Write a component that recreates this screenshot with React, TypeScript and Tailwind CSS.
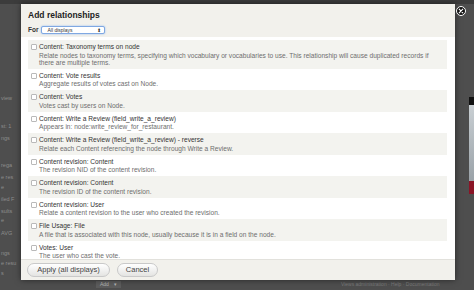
const rows = [
  {
    title: 'Content: Taxonomy terms on node',
    desc: 'Relate nodes to taxonomy terms, specifying which vocabulary or vocabularies to use. This relationship will cause duplicated records if there are multiple terms.',
  },
  { title: 'Content: Vote results', desc: 'Aggregate results of votes cast on Node.' },
  { title: 'Content: Votes', desc: 'Votes cast by users on Node.' },
  { title: 'Content: Write a Review (field_write_a_review)', desc: 'Appears in: node:write_review_for_restaurant.' },
  {
    title: 'Content: Write a Review (field_write_a_review) - reverse',
    desc: 'Relate each Content referencing the node through Write a Review.',
  },
  { title: 'Content revision: Content', desc: 'The revision NID of the content revision.' },
  { title: 'Content revision: Content', desc: 'The revision ID of the content revision.' },
  { title: 'Content revision: User', desc: 'Relate a content revision to the user who created the revision.' },
  {
    title: 'File Usage: File',
    desc: 'A file that is associated with this node, usually because it is in a field on the node.',
  },
  { title: 'Votes: User', desc: 'The user who cast the vote.' },
]

// fragments of the page that shows at the left edge of the overlay
const behind = [
  { top: 'mt-[90px]', text: 'view' },
  { top: 'mt-[20px]', text: 'st: 1' },
  { top: 'mt-[4px]', text: 'ngs' },
  { top: 'mt-[19px]', text: 'rega' },
  { top: 'mt-[4px]', text: 'e res' },
  { top: 'mt-[2px]', text: 'e' },
  { top: 'mt-[4px]', text: 'iled F' },
  { top: 'mt-[4px]', text: 'sults' },
  { top: 'mt-[1px]', text: 'e' },
  { top: 'mt-[5px]', text: 'AVG' },
  { top: 'mt-[12px]', text: 'ngs' },
  { top: 'mt-[2px]', text: 'e resu' },
  { top: 'mt-[2px]', text: 's' },
]

export default function App() {
  return (
    <div className="relative w-[474px] h-[290px] overflow-hidden bg-[#4e4e4e] font-['Liberation_Sans',Arial,sans-serif]">
      {/* page behind the overlay */}
      <div className="h-[4px] bg-[#3c3c3c]" />
      <div className="flex h-[286px]">
        <div className="w-[21px] flex flex-col text-[5.5px] leading-[8px] text-[#8d8d8d]">
          {behind.map((b, i) => (
            <div key={i} className={`${b.top} whitespace-nowrap pl-[1px]`}>
              {b.text}
            </div>
          ))}
        </div>
        <div className="flex-1" />
        <div className="w-[5px] mt-[93px] h-[97px] flex flex-col">
          <div className="h-[8px] bg-[#111]" />
          <div className="flex-1 bg-gradient-to-b from-[#c9cfd3] to-[#9aa2a8]" />
          <div className="h-[13px] bg-[#8a1426]" />
        </div>
      </div>

      {/* bottom strip behind the dialog */}
      <div className="absolute left-0 top-[281px] w-[474px] flex items-center">
        <div className="ml-[96px] h-[7px] px-[4px] flex items-center gap-[5px] bg-[#5c5c5c] text-[5px] text-[#b5b5b5]">
          <span>Add</span>
          <span>▾</span>
        </div>
        <div className="ml-[220px] text-[5px] text-[#7a7a7a] whitespace-nowrap">
          Views administration · Help · Documentation
        </div>
      </div>

      {/* dialog */}
      <div className="absolute left-[21px] top-[4px] w-[434px] h-[276px] flex flex-col bg-white shadow-[0_0_6px_rgba(0,0,0,0.5)]">
        <div className="h-[33px] bg-[#f2f1ec] px-[7px] pt-[6px]">
          <div className="text-[8.5px] leading-[10px] font-bold text-[#222]">Add relationships</div>
          <div className="mt-[5px] flex items-center gap-[3px]">
            <span className="text-[6.5px] font-bold text-[#333]">For</span>
            <div className="w-[64px] h-[8px] rounded-[2px] border border-[#7fa8e2] shadow-[0_0_2px_#8fb8ee] bg-white flex items-center justify-between pl-[5px] pr-[3px]">
              <span className="text-[5px] leading-[6px] text-[#333]">All displays</span>
              <span className="text-[5px] leading-[6px] text-[#333]">⬍</span>
            </div>
          </div>
        </div>

        <div className="flex-1 overflow-hidden px-[7px] pr-[8px] pt-[3px]">
          {rows.map((r, i) => (
            <div
              key={i}
              className={`pl-[3px] pr-[10px] py-[3px] ${i % 2 === 0 ? 'bg-[#f3f3ef]' : 'bg-white'}`}
            >
              <div className="flex items-center gap-[2px]">
                <span className="w-[6px] h-[6px] shrink-0 border border-[#b9b9b9] rounded-[1px] bg-white" />
                <span className="text-[6.6px] leading-[8.5px] text-[#333] whitespace-nowrap">{r.title}</span>
              </div>
              <div className="pl-[8px] text-[6.6px] leading-[7px] text-[#6e6e6e]">{r.desc}</div>
            </div>
          ))}
        </div>

        <div className="h-[21px] bg-[#f2f1ec] border-t border-[#e2e1dc] flex items-center gap-[7px] px-[6px]">
          <button className="h-[14px] w-[83px] rounded-full border border-[#c9c9c9] bg-gradient-to-b from-white to-[#e4e4e2] text-[7.5px] text-[#444]">
            Apply (all displays)
          </button>
          <button className="h-[14px] w-[41px] rounded-full border border-[#c9c9c9] bg-gradient-to-b from-white to-[#e4e4e2] text-[7.5px] text-[#444]">
            Cancel
          </button>
        </div>
      </div>

      {/* close button */}
      <div className="absolute left-[456px] top-[6px] w-[10px] h-[10px] rounded-full bg-[#111] border border-white flex items-center justify-center">
        <svg viewBox="0 0 10 10" className="w-[6px] h-[6px]">
          <path d="M2 2 L8 8 M8 2 L2 8" stroke="white" strokeWidth="2" strokeLinecap="round" />
        </svg>
      </div>
    </div>
  )
}
